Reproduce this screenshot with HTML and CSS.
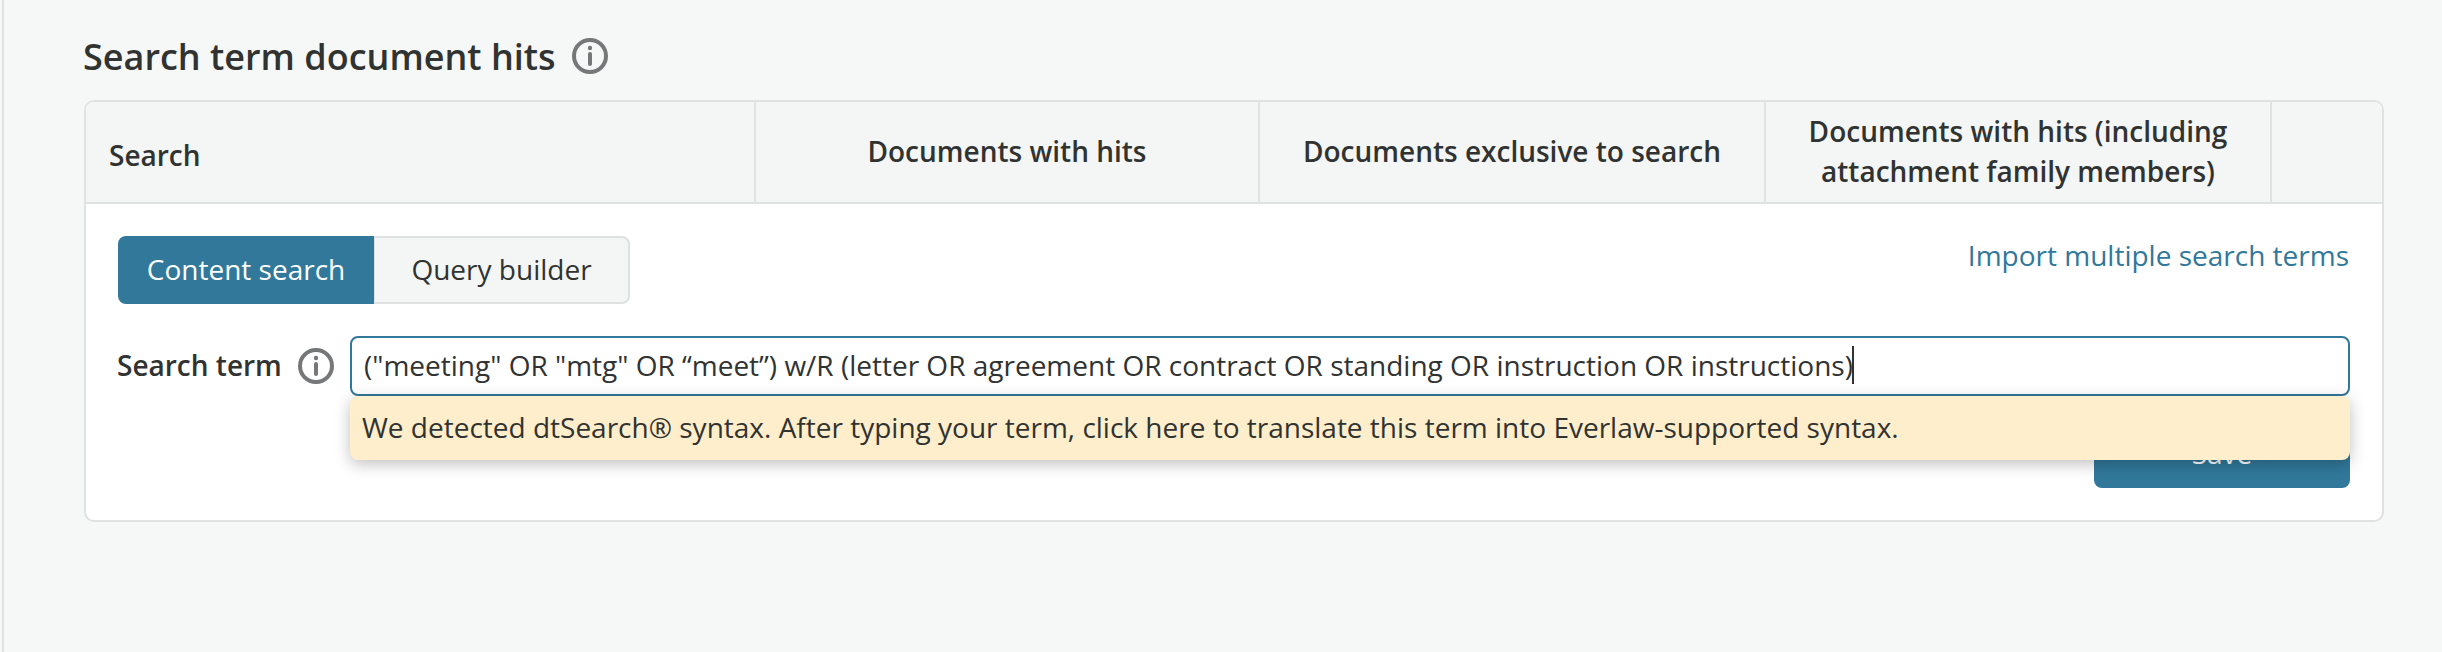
FILE: index.html
```
<!DOCTYPE html>
<html lang="en">
<head>
    <meta charset="UTF-8">
    <title>Search term report</title>
    <link rel="stylesheet" href="styles.css">
</head>
<body>
    <main class="page">
        <div class="page-title">
            <h1>Search term document hits</h1>
            <svg class="info-icon" viewBox="0 0 36 36">
                <circle cx="18" cy="18" r="16" />
                <path d="M18 16v10" />
                <path class="dot" d="M18 10v.1" />
            </svg>
        </div>

        <section class="panel">
            <div class="table-header">
                <div class="col col-search">Search</div>
                <div class="col">Documents with hits</div>
                <div class="col">Documents exclusive to search</div>
                <div class="col">Documents with hits (including attachment family members)</div>
                <div class="col"></div>
            </div>

            <div class="panel-body">
                <div class="toolbar">
                    <div class="tabs">
                        <button class="tab active">Content search</button>
                        <button class="tab">Query builder</button>
                    </div>
                    <a class="import-link">Import multiple search terms</a>
                </div>

                <div class="term-row">
                    <label class="term-label">Search term</label>
                    <svg class="info-icon" viewBox="0 0 36 36">
                        <circle cx="18" cy="18" r="16" />
                        <path d="M18 16v10" />
                        <path class="dot" d="M18 10v.1" />
                    </svg>
                    <div class="term-field">
                        <div class="term-input"><span>("meeting" OR "mtg" OR “meet”) w/R (letter OR agreement OR contract OR standing OR instruction OR instructions)</span><i class="caret"></i></div>
                        <div class="syntax-hint">We detected dtSearch® syntax. After typing your term, click here to translate this term into Everlaw-supported syntax.</div>
                    </div>
                </div>

                <button class="save">Save</button>
            </div>
        </section>
    </main>
</body>
</html>
```
FILE: styles.css
```
* {
    box-sizing: border-box;
}

body {
    margin: 0;
    background-color: #f6f8f7;
    color: #303331;
    font-family: 'Open Sans', 'Noto Sans', sans-serif;
    font-size: 28px;
    line-height: 40px;
}

button {
    border: none;
    padding: 0 0 2px;
    color: inherit;
    font: inherit;
}

.page {
    height: 652px;
    margin-left: 2px;
    padding: 32px 58px 0 80px;
    border-left: 2px solid #dfe2e1;
}

.page-title {
    display: flex;
    align-items: center;
    gap: 17px;
    height: 48px;
    margin-bottom: 20px;
}

.page-title h1 {
    margin: 0 0 0 -1px;
    padding-top: 1px;
    font-size: 36px;
    font-weight: 600;
    line-height: 49px;
}

.info-icon {
    flex: none;
    width: 36px;
    height: 36px;
    fill: none;
    stroke: #757778;
    stroke-width: 4;
    stroke-linecap: round;
}

.page-title .info-icon {
    margin-left: -1px;
}

.info-icon .dot {
    stroke-width: 4.4;
}

.panel {
    height: 422px;
    border: 2px solid #dfe2e1;
    border-radius: 10px;
    background-color: #fff;
}

.table-header {
    display: grid;
    grid-template-columns: 670px 504px 506px 506px 1fr;
    height: 102px;
    border-bottom: 2px solid #dfe2e1;
    border-radius: 8px 8px 0 0;
    background-color: #f4f6f5;
    font-weight: 600;
}

.col {
    display: flex;
    align-items: center;
    justify-content: center;
    padding: 0 40px 2px;
    border-right: 2px solid #dfe2e1;
    text-align: center;
}

.col:last-child {
    border-right: none;
}

.col-search {
    justify-content: flex-start;
    padding: 6px 0 0 23px;
}

.panel-body {
    display: flex;
    flex-direction: column;
    padding: 32px 32px 0;
}

.toolbar {
    display: flex;
    justify-content: space-between;
    height: 100px;
}

.tabs {
    display: flex;
    height: 68px;
}

.tab {
    width: 256px;
    border: 2px solid #dfe2e1;
    border-left-width: 1px;
    border-radius: 0 8px 8px 0;
    background-color: #f4f6f5;
}

.tab.active {
    border: none;
    border-radius: 8px 0 0 8px;
    background-color: #31789a;
    color: #fff;
}

.import-link {
    margin: -1px 1px 0 0;
    color: #31789a;
}

.term-row {
    display: flex;
    align-items: center;
    height: 60px;
    margin-bottom: 24px;
}

.term-label {
    width: 181px;
    margin-left: -1px;
    padding-bottom: 2px;
    font-weight: 600;
}

.term-field {
    position: relative;
    flex: 1;
    margin-left: 16px;
}

.term-input {
    display: flex;
    align-items: center;
    height: 60px;
    padding: 0 0 2px 12px;
    border: 2px solid #31789a;
    border-radius: 8px;
    white-space: nowrap;
}

.caret {
    width: 2px;
    height: 38px;
    margin-left: -1px;
    background-color: #303331;
}

/* Hint drops over the save button */
.syntax-hint {
    position: absolute;
    top: 60px;
    left: 0;
    width: 100%;
    height: 64px;
    padding: 11px 12px;
    border-radius: 8px;
    background-color: #feeecb;
    box-shadow: 0 4px 16px rgba(0, 0, 0, 0.25);
    white-space: nowrap;
}

.save {
    align-self: flex-end;
    width: 256px;
    height: 68px;
    border-radius: 8px;
    background-color: #31789a;
    color: #fff;
}
```
